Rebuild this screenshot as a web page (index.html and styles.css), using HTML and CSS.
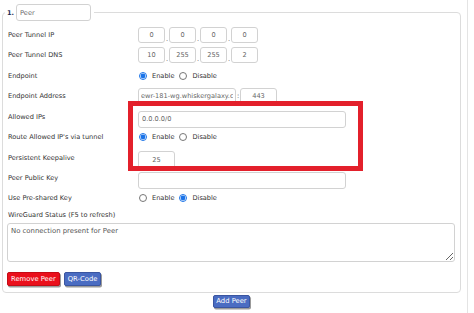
FILE: index.html
```html
<!DOCTYPE html>
<html lang="en">
<head>
    <meta charset="UTF-8">
    <meta name="viewport" content="width=device-width, initial-scale=1.0">
    <title>WireGuard Peers</title>
    <link rel="stylesheet" href="styles.css">
</head>
<body>

    <div class="page">
        <fieldset class="peer">
            <legend><b class="peer-num">1.</b><input type="text" class="peer-name" value="Peer" spellcheck="false" autocomplete="off"></legend>

            <div class="row">
                <label>Peer Tunnel IP</label>
                <div class="ip">
                    <input type="text" class="box" value="0"><span class="dot">.</span>
                    <input type="text" class="box" value="0"><span class="dot">.</span>
                    <input type="text" class="box" value="0"><span class="dot">.</span>
                    <input type="text" class="box" value="0">
                </div>
            </div>
            <div class="row">
                <label>Peer Tunnel DNS</label>
                <div class="ip">
                    <input type="text" class="box" value="10"><span class="dot">.</span>
                    <input type="text" class="box" value="255"><span class="dot">.</span>
                    <input type="text" class="box" value="255"><span class="dot">.</span>
                    <input type="text" class="box" value="2">
                </div>
            </div>
            <div class="row">
                <label>Endpoint</label>
                <div class="radios">
                    <input type="radio" name="endpoint" checked><span>Enable</span>
                    <input type="radio" name="endpoint"><span>Disable</span>
                </div>
            </div>
            <div class="row">
                <label>Endpoint Address</label>
                <div class="ip">
                    <input type="text" class="host" value="ewr-181-wg.whiskergalaxy.com" spellcheck="false"><span class="colon">:</span>
                    <input type="text" class="box port" value="443">
                </div>
            </div>
            <div class="row">
                <label>Allowed IPs</label>
                <div><input type="text" class="wide" value="0.0.0.0/0"></div>
            </div>
            <div class="row">
                <label>Route Allowed IP's via tunnel</label>
                <div class="radios">
                    <input type="radio" name="route" checked><span>Enable</span>
                    <input type="radio" name="route"><span>Disable</span>
                </div>
            </div>
            <div class="row">
                <label>Persistent Keepalive</label>
                <div><input type="text" class="box port keep" value="25"></div>
            </div>
            <div class="row">
                <label>Peer Public Key</label>
                <div><input type="text" class="wide" value=""></div>
            </div>
            <div class="row">
                <label>Use Pre-shared Key</label>
                <div class="radios">
                    <input type="radio" name="psk"><span>Enable</span>
                    <input type="radio" name="psk" checked><span>Disable</span>
                </div>
            </div>

            <div class="status">
                <label>WireGuard Status (F5 to refresh)</label>
                <textarea spellcheck="false">No connection present for Peer</textarea>
            </div>

            <div class="actions">
                <button class="btn btn-red">Remove Peer</button>
                <button class="btn btn-blue">QR-Code</button>
            </div>
        </fieldset>

        <div class="add">
            <button class="btn btn-blue btn-add">Add Peer</button>
        </div>

        <!-- highlight drawn over the form -->
        <div class="highlight"></div>
    </div>

</body>
</html>
```

FILE: styles.css
```css
body {
    margin: 0;
    font-family: "DejaVu Sans", Verdana, sans-serif;
    background-color: #fff;
    color: #333;
}
.page {
    position: relative;
    box-sizing: border-box;
    width: 468px;
    min-height: 313px;
    padding: 4px 6px 0 2px;
    border-right: 1px solid #e4e4e4;
}
.peer {
    margin: 0;
    padding: 4px 5px 6px 4px;
    border: 1px solid #dcdcdc;
    border-radius: 4px;
    min-inline-size: 0;
}
.peer legend {
    display: flex;
    align-items: center;
    gap: 2px;
    margin-left: -2px;
    padding: 0 3px 0 2px;
    color: #555;
}
.peer-num {
    font-size: 6.6px;
    color: #1f2b55;
}
input[type="text"], textarea {
    box-sizing: border-box;
    margin: 0;
    border: 1px solid #d2d2d2;
    border-radius: 3px;
    font-family: "DejaVu Sans", Verdana, sans-serif;
    font-size: 6.6px;
    color: #666;
    background: #fff;
    outline: none;
}
.peer-name {
    width: 75px;
    height: 17px;
    padding: 0 3px;
    color: #6a6a6a;
    -webkit-text-fill-color: #6a6a6a;
}
.row {
    display: grid;
    grid-template-columns: 131px 1fr;
    align-items: center;
    height: 20.3px;
}
.row label, .status label {
    padding-left: 1px;
    font-size: 6.6px;
    color: #333;
}
.ip {
    display: flex;
    align-items: center;
}
.box {
    width: 27px;
    height: 16px;
    padding: 0;
    text-align: center;
}
.dot, .colon {
    width: 4px;
    align-self: flex-end;
    font-size: 6.6px;
    color: #555;
    text-align: center;
    line-height: 8px;
}
.colon {
    align-self: center;
}
.host {
    width: 98px;
    height: 16px;
    padding: 0 2px;
    font-size: 6.9px;
}
.port {
    width: 37px;
}
.keep {
    height: 18px;
}
.wide {
    width: 208px;
    height: 17px;
    padding: 0 3px;
}
.radios {
    display: flex;
    align-items: center;
    font-size: 6.6px;
    color: #333;
}
.radios input {
    width: 8px;
    height: 8px;
    margin: 0 5px 0 1px;
    accent-color: #1a73e8;
}
.radios span {
    margin-right: 4px;
}
.status {
    display: flex;
    flex-direction: column;
    margin-top: 2px;
}
.status label {
    height: 10px;
    line-height: 10px;
}
.status textarea {
    margin-top: 3px;
    width: 100%;
    height: 39px;
    padding: 3px 3px;
    font-size: 6.9px;
    color: #555;
}
.actions {
    display: flex;
    gap: 4px;
    margin-top: 10px;
}
.btn {
    height: 14px;
    padding: 0 3px;
    border-radius: 2px;
    font-family: "DejaVu Sans", Verdana, sans-serif;
    font-size: 6.8px;
    color: #fff;
    cursor: pointer;
    box-shadow: 1px 1.5px 0 #9a9a9a;
}
.btn-red {
    background-color: #ea101c;
    border: 1px solid #c40c16;
}
.btn-blue {
    background-color: #4a6cc2;
    border: 1px solid #3a55a0;
}
.add {
    display: flex;
    justify-content: center;
    margin-top: 2px;
}
.btn-add {
    height: 13px;
    padding: 0 2px;
}

/* red annotation box */
.highlight {
    position: absolute;
    left: 128px;
    top: 101px;
    width: 235px;
    height: 70px;
    box-sizing: border-box;
    border: 5px solid #e3202b;
}
```
